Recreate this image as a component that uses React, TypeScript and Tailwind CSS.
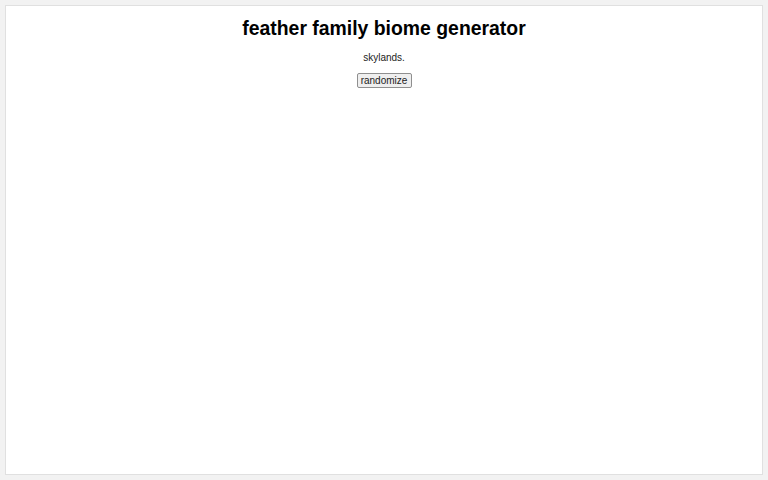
import { FC, useState } from "react";

const biomes = ["skylands.", "deep caverns.", "glacier plains.", "mushroom forest.", "coral shallows."];

const App: FC = () => {
  const [biome, setBiome] = useState<string>(biomes[0]);

  const randomize = () => {
    setBiome(biomes[Math.floor(Math.random() * biomes.length)]);
  };

  return (
    <div className="h-[480px] w-[768px] bg-[#f2f2f2] p-[5px] font-['Liberation_Sans',Arial,sans-serif] text-black">
      <div className="flex h-full flex-col items-center border border-[#e0e0e0] bg-white">
        <h1 className="mt-[9px] text-[19.4px] font-bold leading-[26px]">feather family biome generator</h1>
        <p className="mt-[11px] text-[10px] leading-[12px] text-[#222]">{biome}</p>
        <button
          onClick={randomize}
          className="mt-[9px] h-[15px] w-[55px] rounded-[2px] border border-[#8f8f8f] bg-[#efefef] text-[10px] leading-[12px] text-[#222]"
        >
          randomize
        </button>
      </div>
    </div>
  );
};

export default App;
